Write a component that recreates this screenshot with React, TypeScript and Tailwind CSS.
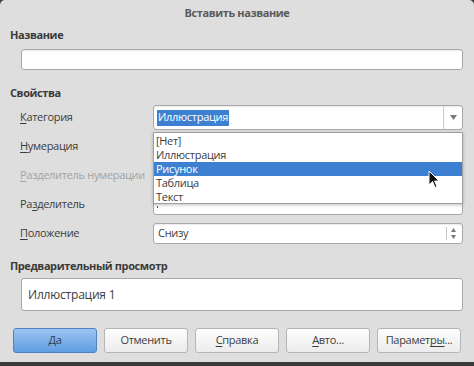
import type { ReactNode } from "react";

const font = { fontFamily: '"Open Sans", "Noto Sans", sans-serif' };

function U({ children }: { children: ReactNode }) {
  return <span className="underline underline-offset-2 decoration-1">{children}</span>;
}

function Row({ label, disabled, children }: { label: ReactNode; disabled?: boolean; children?: ReactNode }) {
  return (
    <div className="flex h-[29px] items-center">
      <div
        className={`w-[153px] whitespace-nowrap pl-[20px] text-[11px] tracking-[-0.3px] ${
          disabled ? "text-[#a3a3a3]" : "text-[#3c3c3c]"
        }`}
      >
        {label}
      </div>
      <div className="w-[310px]">{children}</div>
    </div>
  );
}

function Field({ h = "h-[21px]", children }: { h?: string; children?: ReactNode }) {
  return (
    <div
      className={`${h} flex items-center rounded-[3px] border border-[#a8a8a8] bg-white text-[11px] tracking-[-0.3px] text-[#3c3c3c] shadow-[inset_0_1px_1px_rgba(0,0,0,0.08)]`}
    >
      {children}
    </div>
  );
}

function Btn({ children, primary }: { children: ReactNode; primary?: boolean }) {
  return (
    <div
      className={`flex h-[25px] w-[84px] items-center justify-center rounded-[3px] border text-[11px] tracking-[-0.3px] ${
        primary
          ? "border-[#4f82bf] bg-gradient-to-b from-[#9cc4f2] to-[#5f9de2] text-[#2d3d52]"
          : "border-[#b5b5b5] bg-gradient-to-b from-[#fdfdfd] to-[#ececec] text-[#3c3c3c]"
      }`}
    >
      {children}
    </div>
  );
}

function Heading({ children, className = "" }: { children: ReactNode; className?: string }) {
  return (
    <div className={`flex h-[18px] items-center pl-[10px] text-[11px] font-bold tracking-[-0.4px] text-[#3a3a3a] ${className}`}>
      {children}
    </div>
  );
}

export default function App() {
  return (
    <div style={font} className="relative h-[366px] w-[474px] overflow-hidden bg-[#3a3a3a]">
      <div className="h-[362px] w-[474px] rounded-t-[5px] bg-[#dedede]">
        <div className="flex h-[26px] items-center justify-center text-[11px] font-bold tracking-[-0.4px] text-[#5a5a5a]">
          Вставить название
        </div>
        <Heading>Название</Heading>
        <div className="ml-[21px] mt-[5px] w-[442px]">
          <Field />
        </div>
        <Heading className="mt-[14px]">Свойства</Heading>
        <div className="mt-[1px]">
          <Row label={<><U>К</U>атегория</>}>
            <Field h="h-[25px]">
              <span className="ml-[3px] flex h-[16px] items-center bg-[#3d7fd1] px-[1px] text-white">Иллюстрация</span>
              <div className="ml-auto flex h-full w-[19px] items-center justify-center border-l border-[#c8c8c8]">
                <svg width="7" height="5" viewBox="0 0 7 5">
                  <path d="M0 0 H7 L3.5 5 Z" fill="#7a7a7a" />
                </svg>
              </div>
            </Field>
          </Row>
          <Row label={<><U>Н</U>умерация</>}>
            <Field h="h-[25px]" />
          </Row>
          <Row label={<><U>Р</U>азделитель нумерации</>} disabled>
            <Field />
          </Row>
          <Row label={<>Ра<U>з</U>делитель</>}>
            <Field>
              {/* tail of the separator char peeking below the list */}
              <div className="ml-[3px] mt-[5px] h-[2px] w-px bg-[#555]" />
            </Field>
          </Row>
          <Row label={<><U>П</U>оложение</>}>
            <Field>
              <span className="ml-[4px]">Снизу</span>
              <div className="ml-auto mr-[6px] flex h-[13px] items-center gap-[4px]">
                <div className="h-full w-px bg-[#c8c8c8]" />
                <svg width="5" height="11" viewBox="0 0 5 11">
                  <path d="M2.5 0 L5 4 H0 Z M0 7 H5 L2.5 11 Z" fill="#7a7a7a" />
                </svg>
              </div>
            </Field>
          </Row>
        </div>
        <Heading className="mt-[9px]">Предварительный просмотр</Heading>
        <div className="ml-[21px] mt-[3px] flex h-[33px] w-[442px] items-center rounded-[3px] border border-[#a8a8a8] bg-white pl-[6px] text-[12px] tracking-[-0.2px] text-[#3c3c3c]">
          Иллюстрация 1
        </div>
        <div className="mt-[17px] flex gap-[7px] pl-[13px]">
          <Btn primary>Да</Btn>
          <Btn>Отменить</Btn>
          <Btn>
            <U>С</U>правка
          </Btn>
          <Btn>
            <U>А</U>вто...
          </Btn>
          <Btn>
            Парамет<U>ры</U>...
          </Btn>
        </div>
      </div>

      {/* open dropdown list */}
      <div className="absolute left-[153px] top-[132px] flex h-[72px] w-[310px] flex-col border border-[#a0a0a0] bg-white pt-px text-[11px] tracking-[-0.3px] text-[#3c3c3c] shadow-[0_1px_3px_rgba(0,0,0,0.25)]">
        {["[Нет]", "Иллюстрация", "Рисунок", "Таблица", "Текст"].map((t) => (
          <div
            key={t}
            className={`flex h-[14px] items-center pl-[2px] ${t === "Рисунок" ? "bg-[#3d7fd1] text-white" : ""}`}
          >
            {t}
          </div>
        ))}
      </div>

      {/* mouse pointer */}
      <svg className="absolute left-[428px] top-[170px]" width="12" height="19" viewBox="0 0 12 19">
        <path d="M1 1 L1 15 L4.5 11.5 L7 17.5 L9 16.6 L6.6 11 L11 11 Z" fill="#111" stroke="#fff" strokeWidth="1" />
      </svg>
    </div>
  );
}
